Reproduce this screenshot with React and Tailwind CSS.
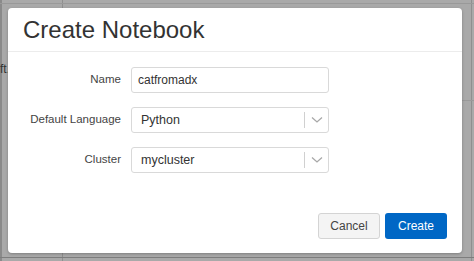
import React from 'react';

const Chevron = () => (
  <svg width="12" height="8" viewBox="0 0 12 8" fill="none">
    <path d="M1 1.5 L6 6 L11 1.5" stroke="#a8a8a8" strokeWidth="1.3" />
  </svg>
);

const Select = ({ value }) => (
  <div className="flex items-center w-[198px] h-[26px] border border-[#d9d9d9] rounded-[3px] bg-white">
    <div className="flex-1 pl-[9px] text-[12.5px] text-[#333]">{value}</div>
    <div className="w-px h-[16px] bg-[#d0d0d0]" />
    <div className="w-[23px] flex justify-center">
      <Chevron />
    </div>
  </div>
);

const Row = ({ label, children }) => (
  <div className="flex items-center">
    <div className="w-[123px] text-right pr-[10px] text-[11.5px] text-[#444]">{label}</div>
    {children}
  </div>
);

export default function App() {
  return (
    <div
      className="relative w-[474px] h-[261px] bg-[#a9a9a9] overflow-hidden"
      style={{ fontFamily: '"Liberation Sans", Arial, sans-serif' }}
    >
      {/* page behind the modal */}
      <div className="absolute left-0 top-0 w-[2px] h-full bg-[#8a8a8a]" />
      <div className="absolute left-[62px] top-0 w-px h-full bg-[#8f8f8f]" />
      <div className="absolute right-[2px] top-0 w-px h-full bg-[#8f8f8f]" />
      <div className="absolute left-0 top-[3px] w-full h-px bg-[#999]" />
      <div className="absolute left-0 bottom-[3px] w-full h-px bg-[#7d7d7d]" />
      <div className="absolute right-0 top-[100px] w-[13px] h-px bg-[#9a9a9a]" />
      <div className="absolute left-0 top-[60px] text-[12px] text-[#333]">ft.</div>

      <div className="absolute left-[8px] top-[8px] w-[454px] h-[245px] bg-white rounded-[4px] shadow-[0_1px_3px_rgba(0,0,0,0.25)] flex flex-col">
        <div className="h-[44px] flex items-center px-[15px] border-b border-[#ececec]">
          <h1 className="text-[24px] text-[#333] leading-none">Create Notebook</h1>
        </div>
        <div className="flex flex-col gap-[14px] pt-[15px]">
          <Row label="Name">
            <div className="flex items-center w-[198px] h-[26px] border border-[#d9d9d9] rounded-[3px] pl-[6px] text-[12px] text-[#333]">
              catfromadx
            </div>
          </Row>
          <Row label="Default Language">
            <Select value="Python" />
          </Row>
          <Row label="Cluster">
            <Select value="mycluster" />
          </Row>
        </div>
        <div className="flex-1" />
        <div className="flex justify-end gap-[5px] px-[15px] pb-[14px]">
          <button className="w-[62px] h-[26px] bg-[#f4f4f4] border border-[#d4d4d4] rounded-[3px] text-[12px] text-[#444]">
            Cancel
          </button>
          <button className="w-[62px] h-[26px] bg-[#0067c5] rounded-[3px] text-[12px] text-white">
            Create
          </button>
        </div>
      </div>
    </div>
  );
}
